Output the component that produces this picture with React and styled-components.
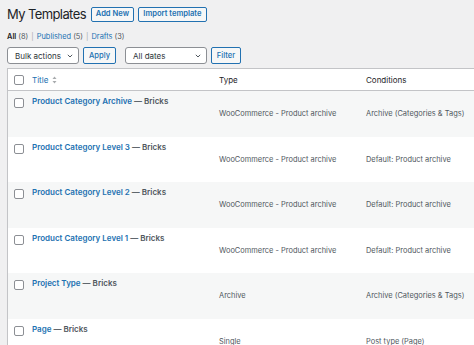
import React from "react";
import styled, { createGlobalStyle } from "styled-components";

const GlobalStyle = createGlobalStyle`
  html, body {
    margin: 0;
    padding: 0;
    background: #f0f0f1;
    overflow: hidden;
  }
  body {
    font-family: Inter, "Liberation Sans", sans-serif;
    color: #3c434a;
  }
`;

const Page = styled.div`
  padding: 5px 0 0 7px;
  width: 520px;
`;

const HeadingRow = styled.div`
  display: flex;
  align-items: center;
  gap: 4px;
  height: 18px;
`;

const Heading = styled.h1`
  margin: 0 1px 0 0;
  font-size: 13px;
  font-weight: 400;
  letter-spacing: -0.6px;
  color: #1d2327;
  line-height: 18px;
`;

const Button = styled.button`
  font-family: inherit;
  font-size: 7.6px;
  font-weight: ${(p) => (p.$bold ? 600 : 500)};
  color: #2271b1;
  background: #f6f7f7;
  border: 1px solid #2271b1;
  border-radius: 2px;
  height: ${(p) => p.$h || 15}px;
  width: ${(p) => (p.$w ? `${p.$w}px` : "auto")};
  padding: 0 ${(p) => (p.$w ? 0 : 5)}px;
  white-space: nowrap;
  line-height: 1;
  cursor: pointer;
`;

const Views = styled.div`
  margin-top: 9px;
  font-size: 7.4px;
  line-height: 10px;
  color: #50575e;
  display: flex;
  gap: 3px;
`;

const ViewLink = styled.span`
  color: ${(p) => (p.$current ? "#1d2327" : "#2271b1")};
  font-weight: ${(p) => (p.$current ? 600 : 400)};
`;

const Sep = styled.span`
  color: #a7aaad;
`;

const Toolbar = styled.div`
  display: flex;
  align-items: center;
  margin-top: 5px;
  height: 17px;
`;

const Select = styled.div`
  box-sizing: border-box;
  width: ${(p) => p.$w}px;
  height: 17px;
  background: #fff;
  border: 1px solid #8c8f94;
  border-radius: 3px;
  display: flex;
  align-items: center;
  justify-content: space-between;
  padding: 0 5px 0 7px;
  font-size: 8px;
  color: #2c3338;
  margin: 0 4px 0 ${(p) => p.$ml || 0}px;
`;

const Table = styled.div`
  margin-top: 4px;
  background: #fff;
  border: 1px solid #c3c4c7;
  box-shadow: 0 1px 1px rgba(0, 0, 0, 0.04);
`;

const Row = styled.div`
  display: grid;
  grid-template-columns: 24px 187px 147px 1fr;
  height: ${(p) => (p.$head ? 21 : 45.5)}px;
  background: ${(p) => (p.$alt ? "#f6f7f7" : "#fff")};
  border-bottom: ${(p) => (p.$head ? "1px solid #c3c4c7" : "none")};
`;

const CheckCell = styled.div`
  padding: ${(p) => (p.$head ? "6px" : "7px")} 0 0 6px;
`;

const Checkbox = styled.span`
  display: block;
  box-sizing: border-box;
  width: 10px;
  height: 10px;
  border: 1px solid #8c8f94;
  border-radius: 2px;
  background: #fff;
`;

const HeadCell = styled.div`
  display: flex;
  align-items: center;
  gap: 4px;
  font-size: 8px;
  color: ${(p) => (p.$link ? "#2271b1" : "#1d2327")};
`;

const TitleCell = styled.div`
  padding-top: 5px;
  font-size: 8px;
  line-height: 11px;
  font-weight: 600;
  white-space: nowrap;
`;

const TitleLink = styled.span`
  color: #2271b1;
`;

const PostState = styled.span`
  color: #50575e;
`;

const TextCell = styled.div`
  display: flex;
  align-items: center;
  font-size: 7.45px;
  color: #50575e;
  white-space: nowrap;
`;

const Chevron = () => (
  <svg width="6" height="4" viewBox="0 0 6 4">
    <path d="M0.8 0.8 L3 3 L5.2 0.8" fill="none" stroke="#50575e" strokeWidth="1" />
  </svg>
);

const SortIcon = () => (
  <svg width="5" height="8" viewBox="0 0 5 8">
    <path d="M2.5 0.5 L4.5 3 H0.5 Z" fill="#a7aaad" />
    <path d="M2.5 7.5 L4.5 5 H0.5 Z" fill="#a7aaad" />
  </svg>
);

const templates = [
  { title: "Product Category Archive", type: "WooCommerce - Product archive", cond: "Archive (Categories & Tags)" },
  { title: "Product Category Level 3", type: "WooCommerce - Product archive", cond: "Default: Product archive" },
  { title: "Product Category Level 2", type: "WooCommerce - Product archive", cond: "Default: Product archive" },
  { title: "Product Category Level 1", type: "WooCommerce - Product archive", cond: "Default: Product archive" },
  { title: "Project Type", type: "Archive", cond: "Archive (Categories & Tags)" },
  { title: "Page", type: "Single", cond: "Post type (Page)" },
];

export default function App() {
  return (
    <Page>
      <GlobalStyle />
      <HeadingRow>
        <Heading>My Templates</Heading>
        <Button $bold $w={43}>Add New</Button>
        <Button $bold $w={69}>Import template</Button>
      </HeadingRow>
      <Views>
        <span>
          <ViewLink $current>All</ViewLink> (8)
        </span>
        <Sep>|</Sep>
        <span>
          <ViewLink>Published</ViewLink> (5)
        </span>
        <Sep>|</Sep>
        <span>
          <ViewLink>Drafts</ViewLink> (3)
        </span>
      </Views>
      <Toolbar>
        <Select $w={72}>
          Bulk actions <Chevron />
        </Select>
        <Button $h={17} $w={33}>Apply</Button>
        <Select $w={82} $ml={9}>
          All dates <Chevron />
        </Select>
        <Button $h={17} $w={30}>Filter</Button>
      </Toolbar>
      <Table>
        <Row $head>
          <CheckCell $head>
            <Checkbox />
          </CheckCell>
          <HeadCell $link>
            Title <SortIcon />
          </HeadCell>
          <HeadCell>Type</HeadCell>
          <HeadCell>Conditions</HeadCell>
        </Row>
        {templates.map((t, i) => (
          <Row key={t.title} $alt={i % 2 === 0}>
            <CheckCell>
              <Checkbox />
            </CheckCell>
            <TitleCell>
              <TitleLink>{t.title}</TitleLink> <PostState>— Bricks</PostState>
            </TitleCell>
            <TextCell>{t.type}</TextCell>
            <TextCell>{t.cond}</TextCell>
          </Row>
        ))}
      </Table>
    </Page>
  );
}
